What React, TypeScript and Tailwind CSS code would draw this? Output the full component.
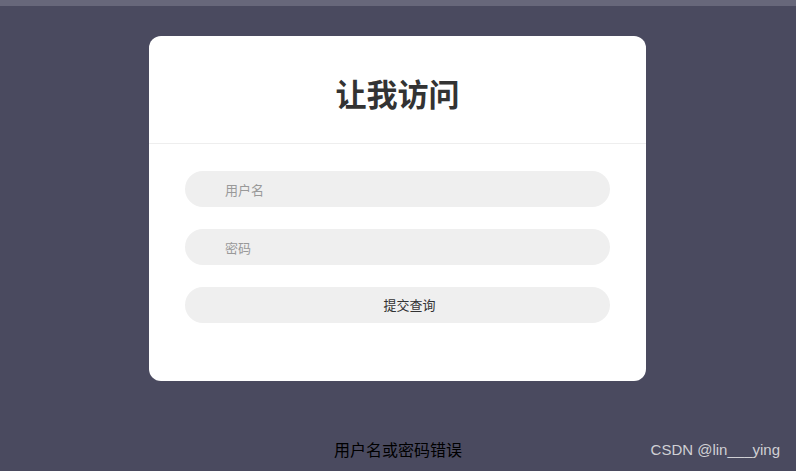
export default function App() {
  return (
    <div
      className="relative h-[471px] w-full overflow-hidden bg-[#4a4a5f]"
      style={{ fontFamily: '"Microsoft YaHei", "Noto Sans CJK SC", "Liberation Sans", sans-serif' }}
    >
      <div className="h-[6px] bg-[#67677a]" />
      <div className="ml-[149px] mt-[30px] w-[497px] rounded-[12px] bg-white">
        <div className="flex h-[108px] items-center justify-center border-b border-[#eeeeee] pt-[6px]">
          <h1 className="text-[31px] font-bold leading-none text-[#333333]">让我访问</h1>
        </div>
        <div className="flex flex-col gap-[22px] px-[36px] pb-[58px] pt-[27px]">
          <input
            className="h-[36px] w-full rounded-full bg-[#efefef] pl-[40px] text-[13px] text-[#333] outline-none placeholder:text-[#999999]"
            placeholder="用户名"
          />
          <input
            type="password"
            className="h-[36px] w-full rounded-full bg-[#efefef] pl-[40px] text-[13px] text-[#333] outline-none placeholder:text-[#999999]"
            placeholder="密码"
          />
          <button className="h-[36px] w-full rounded-full bg-[#efefef] pl-[24px] text-[13px] text-[#333333]">
            提交查询
          </button>
        </div>
      </div>
      <p className="mt-[56px] text-center text-[16px] leading-[24px] text-black">用户名或密码错误</p>
      <span
        className="absolute bottom-[10px] right-[16px] text-[15px] text-[#d0d0d4]"
        style={{ fontFamily: '"Liberation Sans", Arial, sans-serif' }}
      >
        CSDN @lin___ying
      </span>
    </div>
  );
}
